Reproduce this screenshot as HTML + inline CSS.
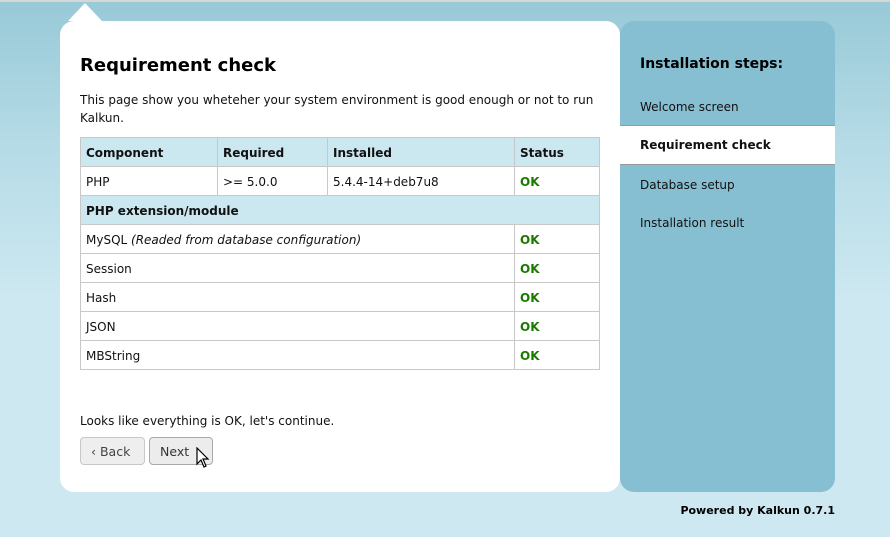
<!DOCTYPE html>
<html><head><meta charset="utf-8"><style>
*{margin:0;padding:0;box-sizing:border-box}
html,body{width:890px;height:537px;overflow:hidden}
body{font-family:"DejaVu Sans","Liberation Sans",sans-serif;font-size:12px;color:#111;
background:linear-gradient(#98c9d7 0px,#b6dce7 150px,#cde8f1 300px,#cde8f1 537px);position:relative}
.top{position:absolute;left:0;top:0;width:890px;height:2px;background:#d6d6d6}
.main{position:absolute;left:60px;top:21px;width:560px;height:471px;background:#fff;border-radius:14px}
.notch{position:absolute;left:66px;top:3px}
.side{position:absolute;left:620px;top:21px;width:215px;height:471px;background:#87bfd2;border-radius:14px}
h1{position:absolute;left:20px;top:34px;font-size:18px;font-weight:bold;color:#000}
.intro{position:absolute;left:20px;top:70px;width:530px;line-height:18px}
table{position:absolute;left:20px;top:116px;width:520px;border-collapse:collapse}
td,th{border:1px solid #c8c8c8;height:29px;padding:1px 5px 0;text-align:left;font-size:12px}
th{background:#cbe7f0;font-weight:bold}
.ok{color:#1a7a00;font-weight:bold}
.foot{position:absolute;left:20px;top:393px}
.btn{position:absolute;top:416px;height:28px;border:1px solid #c8c8c8;border-radius:4px;background:#eee;font-size:12.5px;line-height:28px;padding:0 10px;color:#333}
.side h2{position:absolute;left:20px;top:35px;font-size:14px;font-weight:bold;color:#000}
.si{position:absolute;left:20px;font-size:12px}
.act{position:absolute;left:0;top:104px;width:215px;height:40px;background:#fff;border-top:1px solid #999;border-bottom:1px solid #999;font-weight:bold;padding-left:20px;line-height:38px}
.pw{position:absolute;right:55px;top:504px;font-size:11px;font-weight:bold;color:#000}
</style></head><body>
<div class="top"></div>
<svg class="notch" width="40" height="20"><polygon points="2,18 19,0 36,18" fill="#fff"/></svg>
<div class="main">
<h1>Requirement check</h1>
<div class="intro">This page show you wheteher your system environment is good enough or not to run Kalkun.</div>
<table>
<tr><th style="width:137px">Component</th><th style="width:110px">Required</th><th style="width:187px">Installed</th><th>Status</th></tr>
<tr><td>PHP</td><td>&gt;= 5.0.0</td><td>5.4.4-14+deb7u8</td><td class="ok">OK</td></tr>
<tr><th colspan="4">PHP extension/module</th></tr>
<tr><td colspan="3">MySQL <i>(Readed from database configuration)</i></td><td class="ok">OK</td></tr>
<tr><td colspan="3">Session</td><td class="ok">OK</td></tr>
<tr><td colspan="3">Hash</td><td class="ok">OK</td></tr>
<tr><td colspan="3">JSON</td><td class="ok">OK</td></tr>
<tr><td colspan="3">MBString</td><td class="ok">OK</td></tr>
</table>
<div class="foot">Looks like everything is OK, let's continue.</div>
<div class="btn" style="left:20px;width:65px;color:#444">‹ Back</div>
<div class="btn" style="left:89px;width:64px;border-color:#aaa;background:#ececec">Next</div>
<svg style="position:absolute;left:136px;top:426px" width="14" height="22"><path d="M1,1 L1,17 L5,13 L8,20 L10,19 L7,12 L12,12 Z" fill="#fff" stroke="#000" stroke-width="1.2"/></svg>
</div>
<div class="side">
<h2>Installation steps:</h2>
<div class="si" style="top:79px">Welcome screen</div>
<div class="act">Requirement check</div>
<div class="si" style="top:157px">Database setup</div>
<div class="si" style="top:195px">Installation result</div>
</div>
<div class="pw">Powered by Kalkun 0.7.1</div>
</body></html>
